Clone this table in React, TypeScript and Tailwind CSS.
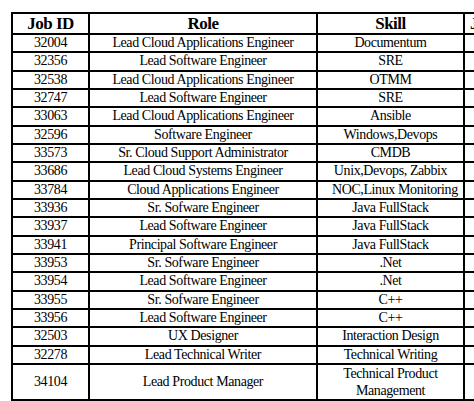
const jobs: [string, string, string][] = [
  ["32004", "Lead Cloud Applications Engineer", "Documentum"],
  ["32356", "Lead Software Engineer", "SRE"],
  ["32538", "Lead Cloud Applications Engineer", "OTMM"],
  ["32747", "Lead Software Engineer", "SRE"],
  ["33063", "Lead Cloud Applications Engineer", "Ansible"],
  ["32596", "Software Engineer", "Windows,Devops"],
  ["33573", "Sr. Cloud Support Administrator", "CMDB"],
  ["33686", "Lead Cloud Systems Engineer", "Unix,Devops, Zabbix"],
  ["33784", "Cloud Applications Engineer", "NOC,Linux Monitoring"],
  ["33936", "Sr. Sofware Engineer", "Java FullStack"],
  ["33937", "Lead Software Engineer", "Java FullStack"],
  ["33941", "Principal Software Engineer", "Java FullStack"],
  ["33953", "Sr. Sofware Engineer", ".Net"],
  ["33954", "Lead Software Engineer", ".Net"],
  ["33955", "Sr. Sofware Engineer", "C++"],
  ["33956", "Lead Software Engineer", "C++"],
  ["32503", "UX Designer", "Interaction Design"],
  ["32278", "Lead Technical Writer", "Technical Writing"],
  ["34104", "Lead Product Manager", "Technical Product Management"],
];

export default function App() {
  return (
    <div className="w-[474px] h-[401px] overflow-hidden bg-white text-black font-['Liberation_Serif',serif]">
      <div className="pt-[12px] pl-[11px]">
        <table className="table-fixed border-collapse w-[520px] text-[14px] leading-[14px] tracking-[-0.4px]">
          <colgroup>
            <col className="w-[77px]" />
            <col className="w-[228px]" />
            <col className="w-[147px]" />
            <col className="w-[68px]" />
          </colgroup>
          <thead>
            <tr className="h-[21px] text-[17px] leading-[17px] font-bold tracking-[-0.5px]">
              <th className="border-2 border-black text-center p-0">Job ID</th>
              <th className="border-2 border-black text-center p-0">Role</th>
              <th className="border-2 border-black text-center p-0">Skill</th>
              <th className="border-2 border-black text-left pl-[5px] py-0 whitespace-nowrap overflow-hidden">Job Type</th>
            </tr>
          </thead>
          <tbody>
            {jobs.map(([id, role, skill], i) => {
              const last = i === jobs.length - 1;
              return (
                <tr
                  key={id}
                  className={last ? "h-[35px] leading-[17px]" : "h-[18.33px] whitespace-nowrap"}
                >
                  <td className="border-2 border-black text-center p-0">{id}</td>
                  <td className="border-2 border-black text-center p-0">{role}</td>
                  <td className="border-2 border-black text-center px-[14px] py-0">{skill}</td>
                  <td className="border-2 border-black p-0"></td>
                </tr>
              );
            })}
          </tbody>
        </table>
      </div>
    </div>
  );
}
